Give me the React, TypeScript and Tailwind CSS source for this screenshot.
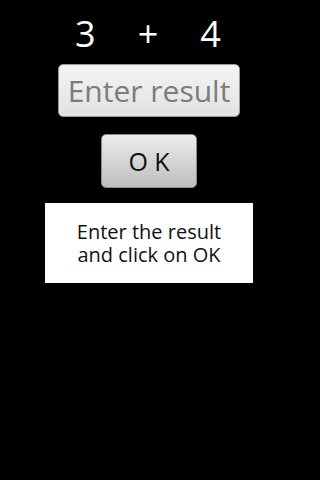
import React from "react";

export default function App() {
  return (
    <div
      className="w-[320px] h-[480px] bg-black overflow-hidden"
      style={{ fontFamily: '"Open Sans", "DejaVu Sans", sans-serif' }}
    >
      <div className="w-[298px] flex flex-col items-center">
        <div className="flex items-center justify-center text-white text-[36px] leading-none mt-[16px] h-[36px] gap-[42px] pr-[2px]">
          <span>3</span>
          <span>+</span>
          <span>4</span>
        </div>
        <div className="mt-[12px] w-[182px] h-[53px] rounded-[5px] border border-[#9a9a9a] bg-gradient-to-b from-[#f4f4f4] to-[#e2e2e2] flex items-center justify-center">
          <span className="text-[30px] leading-none text-[#7c7c7c]">Enter result</span>
        </div>
        <div className="mt-[17px] w-[96px] h-[54px] rounded-[5px] border border-[#8a8a8a] bg-gradient-to-b from-[#ececec] to-[#bebebe] flex items-center justify-center">
          <span className="text-[25px] leading-none text-[#111]">O K</span>
        </div>
        <div className="mt-[15px] w-[208px] h-[80px] bg-white flex flex-col items-center justify-center text-center text-[20px] leading-[23px] text-[#111]">
          <div>Enter the result</div>
          <div>and click on OK</div>
        </div>
      </div>
    </div>
  );
}
